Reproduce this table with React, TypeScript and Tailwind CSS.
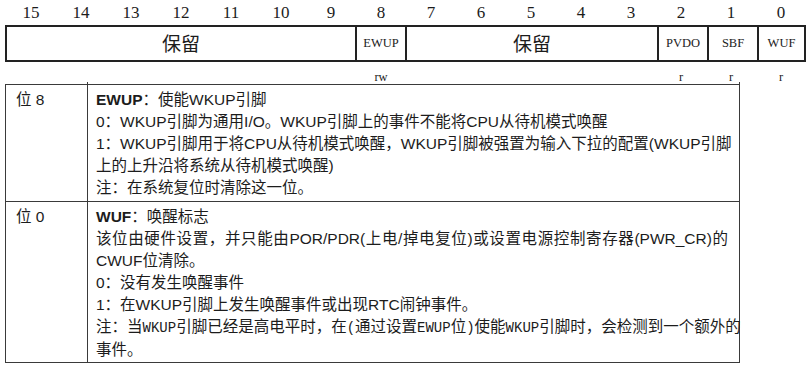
const bits = [15, 14, 13, 12, 11, 10, 9, 8, 7, 6, 5, 4, 3, 2, 1, 0]
const access: Record<number, string> = { 8: 'rw', 2: 'r', 1: 'r', 0: 'r' }

const body = "font-['Liberation_Sans','Noto_Sans_CJK_SC',sans-serif]"
const serif = "font-['Liberation_Serif','Noto_Sans_CJK_SC',serif]"
const mono = "font-['Liberation_Mono',monospace] text-[14px]"

// first line of a wrapped paragraph, stretched to the cell width like the PDF
const Full = ({ children }: { children: React.ReactNode }) => (
  <div className="w-[632px] text-justify [text-align-last:justify]">{children}</div>
)

const App = () => {
  return (
    <div className="w-[810px] h-[366px] bg-white text-[#1c1c1c] overflow-hidden">
      {/* bit numbers */}
      <div className={`ml-[6px] h-[25px] grid grid-cols-[repeat(16,50px)] items-center text-[17px] ${serif}`}>
        {bits.map((b) => (
          <div key={b} className="text-center leading-none">{b}</div>
        ))}
      </div>

      {/* register fields */}
      <div className={`ml-[5px] w-[801px] h-[37px] border-2 border-[#222] flex ${serif}`}>
        <div className="w-[348px] flex items-center justify-center text-[19px] font-['Noto_Sans_CJK_SC',sans-serif]">保留</div>
        <div className="w-[50px] border-l-2 border-[#222] flex items-center justify-center text-[12.5px]">EWUP</div>
        <div className="w-[252px] border-l-2 border-[#222] flex items-center justify-center text-[19px] font-['Noto_Sans_CJK_SC',sans-serif]">保留</div>
        <div className="w-[50px] border-l-2 border-[#222] flex items-center justify-center text-[12.5px]">PVDO</div>
        <div className="w-[50px] border-l-2 border-[#222] flex items-center justify-center text-[12.5px]">SBF</div>
        <div className="flex-1 border-l-2 border-[#222] flex items-center justify-center text-[12.5px]">WUF</div>
      </div>

      {/* access */}
      <div className={`mt-[8px] ml-[6px] h-[14px] grid grid-cols-[repeat(16,50px)] items-center text-[12.5px] ${serif}`}>
        {bits.map((b) => (
          <div key={b} className="text-center leading-none">{access[b] ?? ''}</div>
        ))}
      </div>

      {/* description table */}
      <div className={`relative ml-[5px] w-[735px] border border-[#3a3a3a] text-[15.5px] leading-[22px] ${body}`}>
        <div className="absolute left-[81px] -top-[3px] w-px h-[3px] bg-[#3a3a3a]" />
        <div className="absolute -right-px -top-[3px] w-px h-[3px] bg-[#3a3a3a]" />
        <div className="flex border-b border-[#3a3a3a]">
          <div className="w-[82px] shrink-0 border-r border-[#3a3a3a] pl-[10px] pt-[4px]">位 8</div>
          <div className="flex-1 pl-[8px] pt-[4px] pb-[2px] whitespace-nowrap">
            <div><b>EWUP</b>：使能WKUP引脚</div>
            <div>0：WKUP引脚为通用I/O。WKUP引脚上的事件不能将CPU从待机模式唤醒</div>
            <Full>1：WKUP引脚用于将CPU从待机模式唤醒，WKUP引脚被强置为输入下拉的配置(WKUP引脚</Full>
            <div>上的上升沿将系统从待机模式唤醒)</div>
            <div>注：在系统复位时清除这一位。</div>
          </div>
        </div>
        <div className="flex">
          <div className="w-[82px] shrink-0 border-r border-[#3a3a3a] pl-[10px] pt-[4px]">位 0</div>
          <div className="flex-1 pl-[8px] pt-[4px] pb-[1px] whitespace-nowrap">
            <div><b>WUF</b>：唤醒标志</div>
            <Full>该位由硬件设置，并只能由POR/PDR(上电/掉电复位)或设置电源控制寄存器(PWR_CR)的</Full>
            <div>CWUF位清除。</div>
            <div>0：没有发生唤醒事件</div>
            <div>1：在WKUP引脚上发生唤醒事件或出现RTC闹钟事件。</div>
            <Full>
              注：当<span className={mono}>WKUP</span>引脚已经是高电平时，在<span className={mono}>(</span>通过设置<span className={mono}>EWUP</span>位<span className={mono}>)</span>使能<span className={mono}>WKUP</span>引脚时，会检测到一个额外的
            </Full>
            <div>事件。</div>
          </div>
        </div>
      </div>
    </div>
  )
}

export default App
